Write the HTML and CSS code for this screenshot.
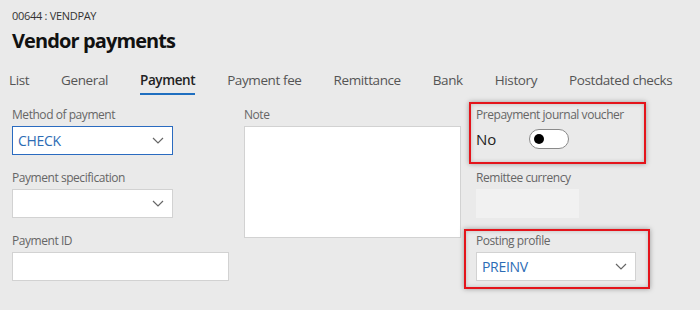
FILE: index.html
```html
<!DOCTYPE html>
<html lang="en">
<head>
  <meta charset="UTF-8">
  <meta name="viewport" content="width=device-width, initial-scale=1.0">
  <title>Vendor payments</title>
  <link rel="stylesheet" href="styles.css">
</head>
<body>
  <div class="header">
    <div class="caption">00644 : VENDPAY</div>
    <h1 class="title">Vendor payments</h1>
  </div>

  <div class="tabs">
    <span class="tab">List</span>
    <span class="tab">General</span>
    <span class="tab active">Payment</span>
    <span class="tab">Payment fee</span>
    <span class="tab">Remittance</span>
    <span class="tab">Bank</span>
    <span class="tab">History</span>
    <span class="tab">Postdated checks</span>
  </div>

  <div class="form">
    <div class="column">
      <div class="field">
        <label class="label">Method of payment</label>
        <div class="box select focused" style="width: 161px">
          <span class="value">CHECK</span>
          <svg class="chevron" width="12" height="7" viewBox="0 0 12 7"><polyline points="1,1 6,6 11,1" fill="none" stroke="#666" stroke-width="1.2"/></svg>
        </div>
      </div>
      <div class="field">
        <label class="label">Payment specification</label>
        <div class="box select" style="width: 161px">
          <span class="value"></span>
          <svg class="chevron" width="12" height="7" viewBox="0 0 12 7"><polyline points="1,1 6,6 11,1" fill="none" stroke="#666" stroke-width="1.2"/></svg>
        </div>
      </div>
      <div class="field">
        <label class="label">Payment ID</label>
        <div class="box" style="width: 217px"></div>
      </div>
    </div>

    <div class="column">
      <div class="field">
        <label class="label">Note</label>
        <div class="box note"></div>
      </div>
    </div>

    <div class="column">
      <div class="field marked marked-toggle">
        <label class="label">Prepayment journal voucher</label>
        <div class="toggle-row">
          <span class="toggle-text">No</span>
          <span class="toggle"><span class="knob"></span></span>
        </div>
      </div>
      <div class="field">
        <label class="label">Remittee currency</label>
        <div class="box readonly" style="width: 103px"></div>
      </div>
      <div class="field marked marked-profile">
        <label class="label">Posting profile</label>
        <div class="box select" style="width: 160px">
          <span class="value">PREINV</span>
          <svg class="chevron" width="12" height="7" viewBox="0 0 12 7"><polyline points="1,1 6,6 11,1" fill="none" stroke="#666" stroke-width="1.2"/></svg>
        </div>
      </div>
    </div>
  </div>
</body>
</html>
```

FILE: styles.css
```css
body {
  margin: 0;
  min-height: 310px;
  background-color: #eaeaea;
  font-family: "Open Sans", "Noto Sans", sans-serif;
  color: #222;
}
.header {
  padding: 9px 12px 0;
}
.caption {
  font-size: 11px;
  line-height: 14px;
  color: #333;
  letter-spacing: -0.3px;
}
.title {
  margin: 5px 0 0;
  font-size: 20px;
  line-height: 26px;
  font-weight: 700;
  color: #111;
  letter-spacing: -0.9px;
}
.tabs {
  display: flex;
  gap: 32px;
  padding-left: 9px;
  margin-top: 16px;
}
.tab {
  font-size: 13.5px;
  line-height: 20px;
  color: #555;
  padding-bottom: 3px;
  border-bottom: 2px solid transparent;
  letter-spacing: -0.4px;
}
.tab.active {
  color: #222;
  font-weight: 600;
  border-bottom-color: #1f6fc0;
}
.form {
  display: grid;
  grid-template-columns: 232px 232px auto;
  padding: 0 0 30px 12px;
  margin-top: 12px;
}
.column {
  display: flex;
  flex-direction: column;
  gap: 15px;
}
.field {
  display: flex;
  flex-direction: column;
  gap: 3px;
}
.label {
  font-size: 12px;
  line-height: 16px;
  color: #666;
  letter-spacing: -0.45px;
}
.box {
  box-sizing: border-box;
  height: 29px;
  background-color: #fff;
  border: 1px solid #d2d2d2;
}
.select {
  display: flex;
  align-items: center;
  justify-content: space-between;
  padding: 0 8px 0 5px;
}
.select .value {
  font-size: 14px;
  color: #2c6cb5;
  letter-spacing: -0.3px;
}
.focused {
  border-color: #2a6bc0;
}
.note {
  width: 217px;
  height: 112px;
}
.readonly {
  background-color: #f1f1f1;
  border-color: #f1f1f1;
}
.toggle-row {
  display: flex;
  align-items: center;
  height: 32px;
  margin-top: -3px;
}
.toggle-text {
  width: 53px;
  font-size: 15px;
  color: #222;
}
.toggle {
  box-sizing: border-box;
  display: flex;
  align-items: center;
  width: 40px;
  height: 20px;
  padding-left: 4px;
  background-color: #fff;
  border: 1px solid #8a8a8a;
  border-radius: 10px;
}
.knob {
  width: 10px;
  height: 10px;
  border-radius: 50%;
  background-color: #000;
}
.marked {
  position: relative;
}
.marked::after {
  content: "";
  position: absolute;
  box-sizing: border-box;
  border: 2px solid #e4141b;
  box-shadow: 0 0 5px rgba(0, 0, 0, 0.35), inset 0 0 4px rgba(0, 0, 0, 0.2);
  pointer-events: none;
}
.marked-toggle::after {
  top: -5px;
  left: -7px;
  width: 177px;
  height: 62px;
}
.marked-profile::after {
  top: -4px;
  left: -12px;
  width: 186px;
  height: 60px;
}
```
